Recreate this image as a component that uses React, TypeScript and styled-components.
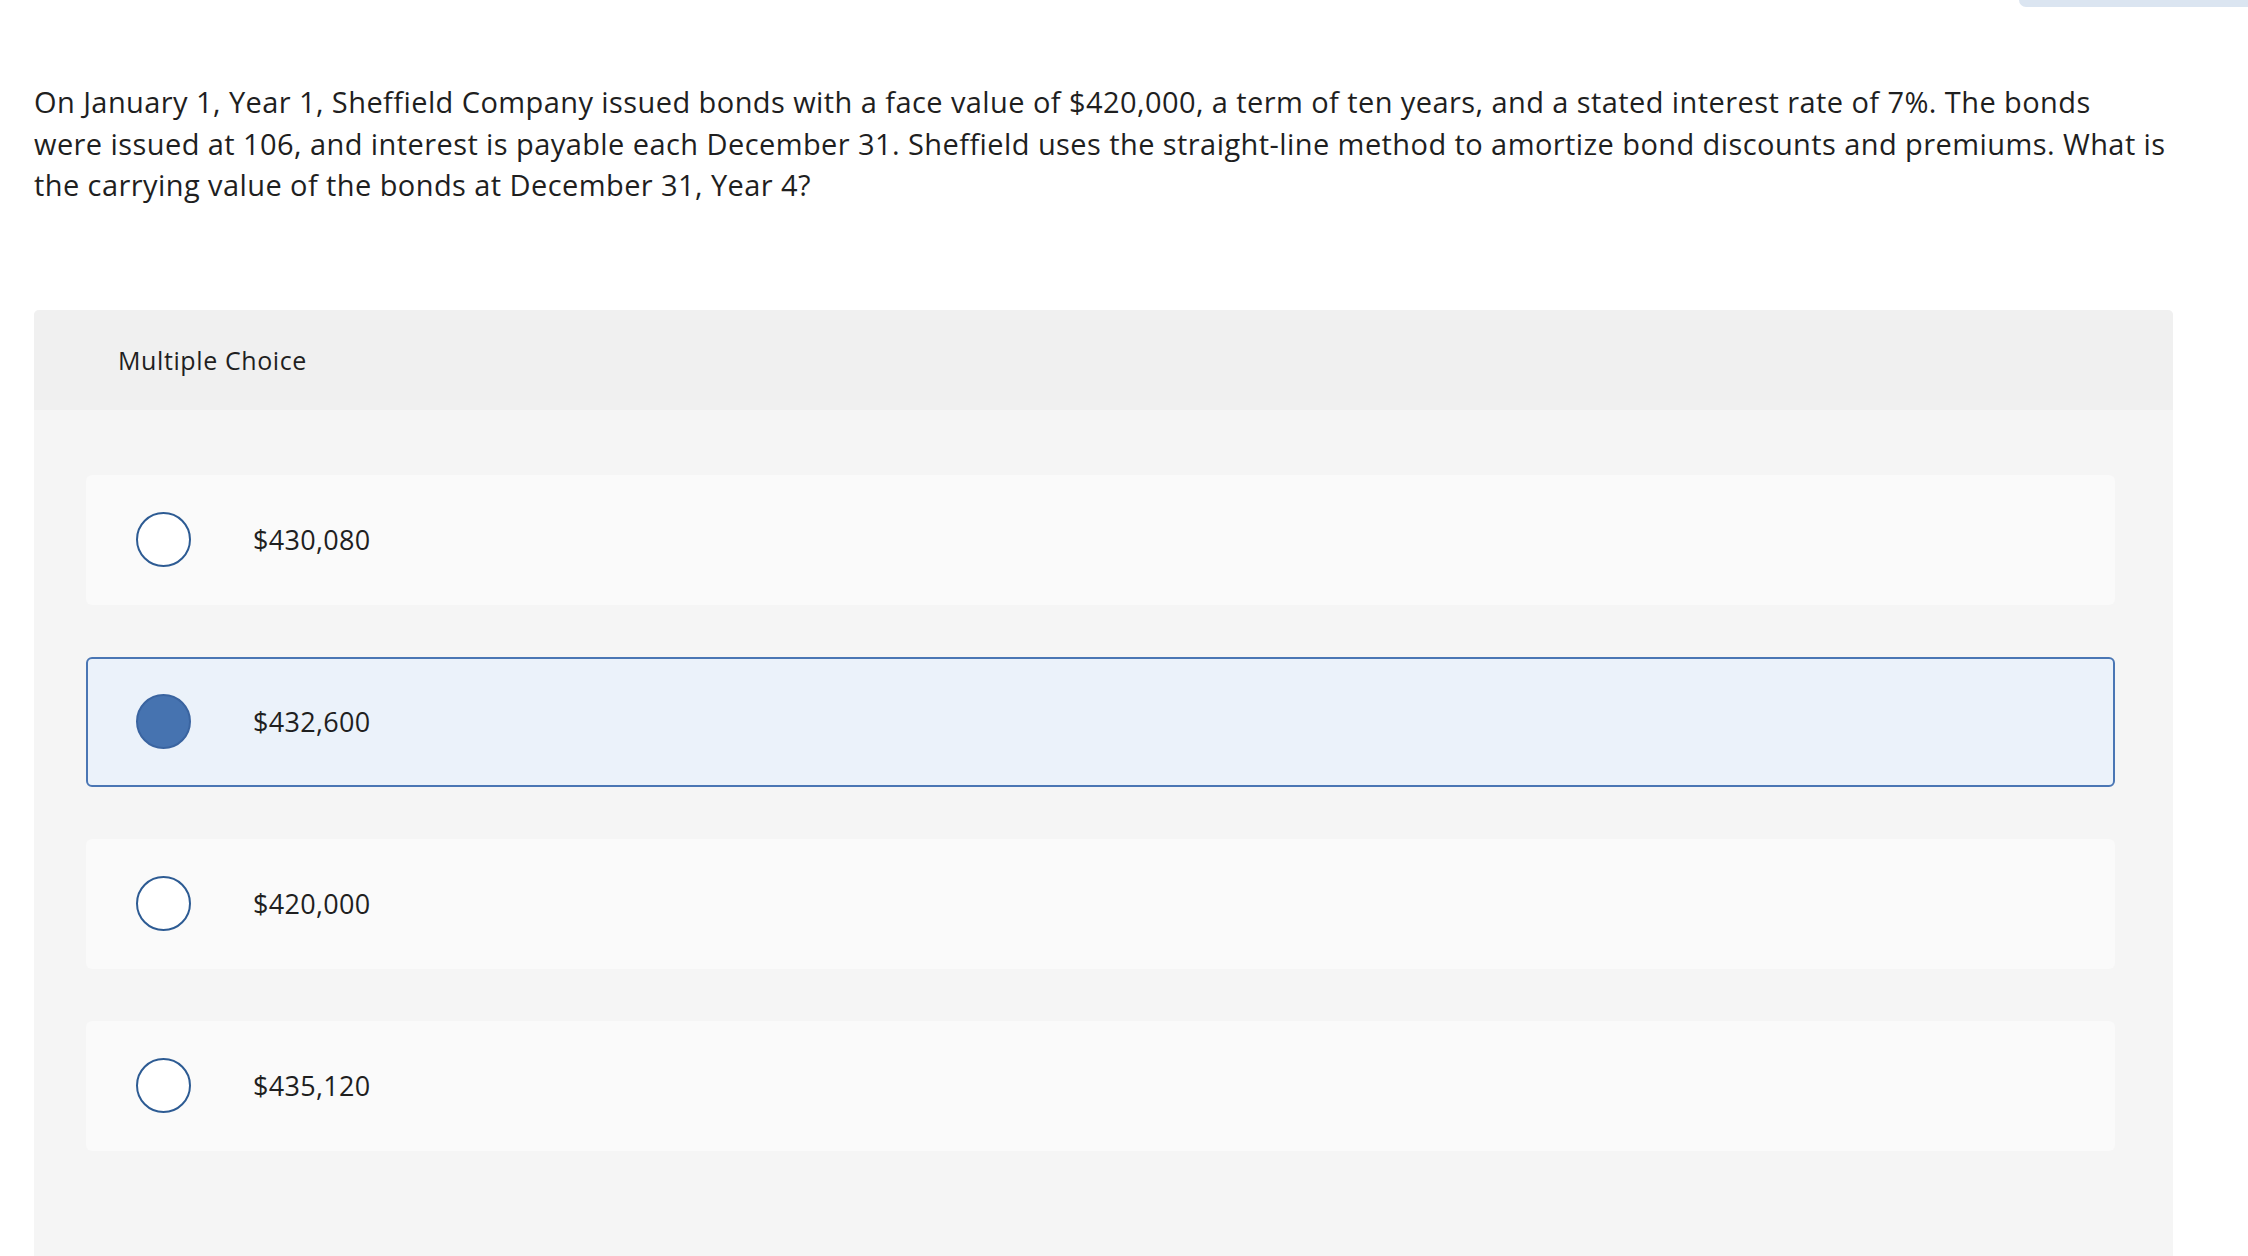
import React, { useState } from "react";
import styled, { createGlobalStyle } from "styled-components";

const GlobalStyle = createGlobalStyle`
  html, body {
    margin: 0;
    padding: 0;
    background: #ffffff;
  }
  body {
    font-family: "Open Sans", Lato, "Liberation Sans", sans-serif;
    color: #222222;
  }
`;

const Page = styled.div`
  display: flex;
  flex-direction: column;
  min-height: 1256px;
`;

const TopStrip = styled.div`
  display: flex;
  justify-content: flex-end;
`;

const TopTab = styled.div`
  width: 229px;
  height: 7px;
  background: #dbe5f1;
  border-bottom-left-radius: 7px;
`;

const Question = styled.p`
  margin: 74px 20px 0 34px;
  font-size: 29px;
  line-height: 41.6px;
  letter-spacing: 0.42px;
  color: #1f1f1f;
  white-space: nowrap;
`;

const ChoicePanel = styled.section`
  margin: 104px 75px 0 34px;
  background: #f5f5f5;
  border-radius: 5px 5px 0 0;
  flex: 1;
  display: flex;
  flex-direction: column;
`;

const PanelHeader = styled.div`
  height: 100px;
  display: flex;
  align-items: center;
  padding-left: 84px;
  background: #f0f0f0;
  border-radius: 5px 5px 0 0;
  font-size: 25px;
  letter-spacing: 0.6px;
  color: #1f1f1f;
`;

const OptionList = styled.div`
  display: flex;
  flex-direction: column;
  gap: 52px;
  padding: 65px 58px 120px 52px;
`;

const Option = styled.label<{ $selected: boolean }>`
  display: flex;
  align-items: center;
  height: 130px;
  box-sizing: border-box;
  padding-left: ${(p) => (p.$selected ? 48 : 50)}px;
  border-radius: 6px;
  background: ${(p) => (p.$selected ? "#ebf2fa" : "#fafafa")};
  border: ${(p) => (p.$selected ? "2px solid #4a76b4" : "none")};
  cursor: pointer;
`;

const Radio = styled.span<{ $selected: boolean }>`
  width: 55px;
  height: 55px;
  box-sizing: border-box;
  border-radius: 50%;
  flex-shrink: 0;
  border: 2px solid ${(p) => (p.$selected ? "#3a64a0" : "#2d5b93")};
  background: ${(p) => (p.$selected ? "#4673b0" : "#ffffff")};
`;

const OptionText = styled.span`
  margin-left: 62px;
  font-size: 27px;
  letter-spacing: 0.3px;
  color: #1f1f1f;
`;

const choices = ["$430,080", "$432,600", "$420,000", "$435,120"];

export default function App() {
  const [selected, setSelected] = useState(1);

  return (
    <Page>
      <GlobalStyle />
      <TopStrip>
        <TopTab />
      </TopStrip>
      <Question>
        On January 1, Year 1, Sheffield Company issued bonds with a face value of $420,000, a term of ten
        years, and a stated interest rate of 7%. The bonds
        <br />
        were issued at 106, and interest is payable each December 31. Sheffield uses the straight-line method
        to amortize bond discounts and premiums. What is
        <br />
        the carrying value of the bonds at December 31, Year 4?
      </Question>
      <ChoicePanel>
        <PanelHeader>Multiple Choice</PanelHeader>
        <OptionList>
          {choices.map((c, i) => (
            <Option key={c} $selected={selected === i} onClick={() => setSelected(i)}>
              <Radio $selected={selected === i} />
              <OptionText>{c}</OptionText>
            </Option>
          ))}
        </OptionList>
      </ChoicePanel>
    </Page>
  );
}
